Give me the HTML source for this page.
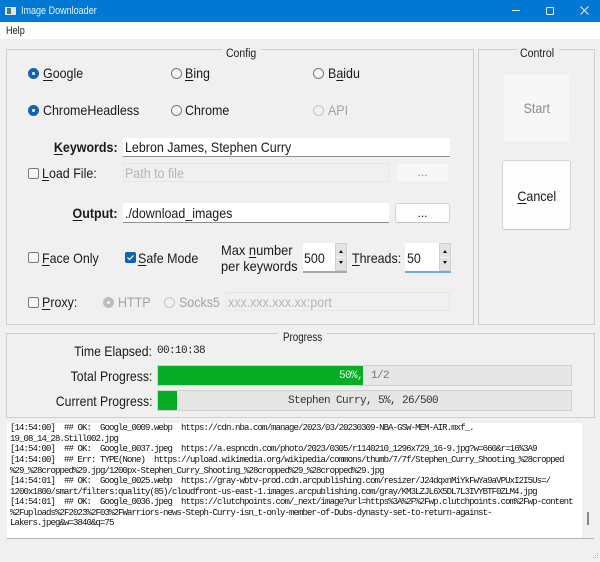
<!DOCTYPE html>
<html><head><meta charset="utf-8">
<style>
html,body{margin:0;padding:0;width:600px;height:562px;overflow:hidden;background:#f0f0f0}
body{position:relative;font-family:"Liberation Sans","DejaVu Sans",sans-serif;font-size:14px;color:#1a1a1a}
.a,.t,.r,.c,.m{position:absolute}
.t{white-space:pre;line-height:18px;height:18px;transform:translateY(-50%) scaleX(var(--s,.89));transform-origin:left center}
.rt{transform-origin:right center}
.d{color:#a3a3a3}
u{text-underline-offset:2px}
.box{position:absolute;border:1px solid #cfcfcf;box-sizing:border-box}
.r{width:9px;height:9px;border-radius:50%;border:1px solid #7a7a7a;background:#f7f7f7}
.r.on{width:3px;height:3px;border:4px solid #0f62b4;background:#fff}
.r.dis{border-color:#c4c4c4;background:#f0f0f0}
.r.dison{width:3px;height:3px;border:4px solid #bdbdbd;background:#f5f5f5}
.c{width:9px;height:9px;border:1px solid #7a7a7a;border-radius:2px;background:#f7f7f7}
.edit{position:absolute;background:#fff;border-bottom:1px solid #8f8f8f;box-sizing:border-box}
.edis{position:absolute;background:#f0f0f0;border:1px solid #e6e6e6;box-sizing:border-box}
.btn{position:absolute;background:#fdfdfd;border:1px solid #d4d4d4;border-bottom-color:#c4c4c4;border-radius:3px;box-sizing:border-box;text-align:center}
.btn.dis{background:#f7f7f7;border-color:#f1f1f1}
.btn span{display:inline-block;transform:scaleX(.89)}
.m{font-family:"Liberation Mono",monospace;white-space:pre}
.pm{font-size:11px;letter-spacing:-.6px;line-height:12px}
.log{font-size:9px;letter-spacing:-.9px;line-height:10px;height:10px;color:#111;left:10px}
.spin{position:absolute;width:10px;height:26px;background:#e2e2e2;border:1px solid #cfcfcf}
.spin:before,.spin:after{content:"";position:absolute;left:3px;border-left:2.5px solid transparent;border-right:2.5px solid transparent}
.spin:before{top:6px;border-bottom:3px solid #111}
.spin:after{bottom:6px;border-top:3px solid #111}
.spin i{position:absolute;left:0;right:0;top:13px;height:1px;background:#f8f8f8}
.bar{position:absolute;background:#e6e6e6;border:1px solid #d2d2d2;box-sizing:border-box;left:157px;width:415px;height:22px}
.fill{position:absolute;left:0;top:0;bottom:0;background:#06ad25}
</style></head>
<body>
<!-- title bar -->
<div class="a" style="left:0;top:0;width:600px;height:22px;background:#0078d4"></div>
<div class="a" style="left:5px;top:7px;width:11px;height:8px;background:#d8e6ea"></div>
<div class="a" style="left:7px;top:8px;width:4px;height:6px;background:#4f7a6d"></div>
<div class="t" style="left:21px;top:11px;color:#e8f3fb;font-size:11px;--s:.82">Image Downloader</div>
<svg class="a" style="left:500px;top:0" width="100" height="22" fill="none" stroke="#e6f1fa" stroke-width="1">
<path d="M12 10.500h8"/><rect x="46.500" y="7.500" width="7" height="7" rx="1"/><path d="M80.500 6.500l8 8M88.500 6.500l-8 8"/></svg>
<!-- menu -->
<div class="a" style="left:0;top:22px;width:600px;height:17px;background:#fff"></div>
<div class="t" style="left:6px;top:31px;font-size:11px;--s:.83">Help</div>

<!-- Config -->
<div class="box" style="left:6px;top:49px;width:468px;height:276px"></div>
<div class="a" style="left:222px;top:46px;width:39px;height:8px;background:#f0f0f0"></div>
<div class="t" style="left:226px;top:54px;font-size:11.500px;--s:.91">Config</div>

<div class="r on" style="left:28px;top:68px"></div>
<div class="t" style="left:43px;top:73px"><u>G</u>oogle</div>
<div class="r" style="left:171px;top:68px"></div>
<div class="t" style="left:185px;top:73px"><u>B</u>ing</div>
<div class="r" style="left:313px;top:68px"></div>
<div class="t" style="left:328px;top:73px">B<u>a</u>idu</div>

<div class="r on" style="left:28px;top:105px"></div>
<div class="t" style="left:43px;top:110px">ChromeHeadless</div>
<div class="r" style="left:171px;top:105px"></div>
<div class="t" style="left:185px;top:110px">Chrome</div>
<div class="r dis" style="left:313px;top:105px"></div>
<div class="t d" style="left:328px;top:110px">API</div>

<div class="t rt" style="right:482px;top:147px;font-weight:bold"><u>K</u>eywords:</div>
<div class="edit" style="left:123px;top:138px;width:327px;height:19px"></div>
<div class="t" style="left:125px;top:147px">Lebron James, Stephen Curry</div>

<div class="c" style="left:28px;top:168px"></div>
<div class="t" style="left:42px;top:173px"><u>L</u>oad File:</div>
<div class="edis" style="left:123px;top:163px;width:266px;height:19px"></div>
<div class="t" style="left:125px;top:173px;color:#b5b5b5">Path to file</div>
<div class="btn dis" style="left:396px;top:163px;width:53px;height:19px;color:#8a8a8a;line-height:17px;font-size:12px">...</div>

<div class="t rt" style="right:482px;top:213px;font-weight:bold"><u>O</u>utput:</div>
<div class="edit" style="left:123px;top:203px;width:266px;height:20px"></div>
<div class="t" style="left:125px;top:213px">./download_images</div>
<div class="btn" style="left:395px;top:203px;width:55px;height:20px;line-height:18px;font-size:12px">...</div>

<div class="c" style="left:28px;top:252px"></div>
<div class="t" style="left:42px;top:258px"><u>F</u>ace Only</div>
<div class="a" style="left:125px;top:252px;width:11px;height:11px;background:#0f62b4;border-radius:2px"></div>
<svg class="a" style="left:125px;top:252px" width="11" height="11" fill="none" stroke="#fff" stroke-width="1.200"><path d="M2.500 5.500l2 2 4-4"/></svg>
<div class="t" style="left:138px;top:258px"><u>S</u>afe Mode</div>
<div class="t" style="left:221px;top:250px;--s:.92">Max <u>n</u>umber</div>
<div class="t" style="left:221px;top:266px;--s:.92">per keywords</div>

<div class="edit" style="left:303px;top:243px;width:44px;height:30px;border-bottom:2px solid #a8a8a8"></div>
<div class="t" style="left:304px;top:258px">500</div>
<div class="spin" style="left:335px;top:243px"><i></i></div>
<div class="t" style="left:352px;top:258px"><u>T</u>hreads:</div>
<div class="edit" style="left:405px;top:243px;width:46px;height:30px;border-bottom:2px solid #73a9dc"></div>
<div class="t" style="left:407px;top:258px">50</div>
<div class="spin" style="left:439px;top:243px"><i></i></div>

<div class="c" style="left:28px;top:297px"></div>
<div class="t" style="left:42px;top:302px"><u>P</u>roxy:</div>
<div class="r dison" style="left:103px;top:297px"></div>
<div class="t d" style="left:118px;top:302px">HTTP</div>
<div class="r dis" style="left:164px;top:297px"></div>
<div class="t d" style="left:179px;top:302px">Socks5</div>
<div class="edis" style="left:226px;top:292px;width:224px;height:19px"></div>
<div class="t" style="left:228px;top:302px;color:#b5b5b5">xxx.xxx.xxx.xx:port</div>

<!-- Control -->
<div class="box" style="left:478px;top:49px;width:117px;height:276px"></div>
<div class="a" style="left:517px;top:46px;width:42px;height:8px;background:#f0f0f0"></div>
<div class="t" style="left:520px;top:54px;font-size:11.500px;--s:.92">Control</div>
<div class="btn dis" style="left:503px;top:74px;width:67px;height:68px;color:#8a8a8a;line-height:67px"><span>Start</span></div>
<div class="btn" style="left:502px;top:160px;width:69px;height:70px;line-height:70px"><span><u>C</u>ancel</span></div>

<!-- Progress -->
<div class="box" style="left:6px;top:333px;width:589px;height:85px"></div>
<div class="a" style="left:278px;top:330px;width:48px;height:8px;background:#f0f0f0"></div>
<div class="t" style="left:283px;top:338px;font-size:11.500px;--s:.85">Progress</div>

<div class="t rt" style="right:448px;top:351px;--s:.875">Time Elapsed:</div>
<div class="m pm" style="left:157px;top:345px;color:#222">00:10:38</div>
<div class="t rt" style="right:448px;top:376px;--s:.875">Total Progress:</div>
<div class="bar" style="top:365px;height:21px"><div class="fill" style="width:205px"></div></div>
<div class="m pm" style="left:339px;top:370px;color:#e8f8ea">50%,</div>
<div class="m pm" style="left:371px;top:370px;color:#777">1/2</div>
<div class="t rt" style="right:448px;top:401px;--s:.875">Current Progress:</div>
<div class="bar" style="top:390px;height:21px"><div class="fill" style="width:19px"></div></div>
<div class="m pm" style="left:288px;top:395px;color:#333">Stephen Curry, 5%, 26/500</div>

<!-- Log -->
<div class="a" style="left:7px;top:423px;width:575px;height:115px;background:#fff"></div>
<div class="a" style="left:7px;top:538px;width:587px;height:1px;background:#b4b4b4"></div>
<div class="a" style="left:587px;top:512px;width:2px;height:13px;background:#8a8a8a"></div>
<div class="a m log" style="top:423px">[14:54:00]  ## OK:  Google_0009.webp  https://cdn.nba.com/manage/2023/03/20230309-NBA-GSW-MEM-AIR.mxf_.</div>
<div class="a m log" style="top:434px">19_08_14_28.Still002.jpg</div>
<div class="a m log" style="top:444px">[14:54:00]  ## OK:  Google_0037.jpeg  https://a.espncdn.com/photo/2023/0305/r1140210_1296x729_16-9.jpg?w=660&amp;r=16%3A9</div>
<div class="a m log" style="top:455px">[14:54:00]  ## Err: TYPE(None)  https://upload.wikimedia.org/wikipedia/commons/thumb/7/7f/Stephen_Curry_Shooting_%28cropped</div>
<div class="a m log" style="top:466px">%29_%28cropped%29.jpg/1200px-Stephen_Curry_Shooting_%28cropped%29_%28cropped%29.jpg</div>
<div class="a m log" style="top:476px">[14:54:01]  ## OK:  Google_0025.webp  https://gray-wbtv-prod.cdn.arcpublishing.com/resizer/J24dqxnMiYkFwYa9aVPUxI2I5Us=/</div>
<div class="a m log" style="top:487px">1200x1800/smart/filters:quality(85)/cloudfront-us-east-1.images.arcpublishing.com/gray/KM3LZJL6X5DL7L3IVYBTF0ZLM4.jpg</div>
<div class="a m log" style="top:497px">[14:54:01]  ## OK:  Google_0036.jpeg  https://clutchpoints.com/_next/image?url=https%3A%2F%2Fwp.clutchpoints.com%2Fwp-content</div>
<div class="a m log" style="top:508px">%2Fuploads%2F2023%2F03%2FWarriors-news-Steph-Curry-isn_t-only-member-of-Dubs-dynasty-set-to-return-against-</div>
<div class="a m log" style="top:518px">Lakers.jpeg&amp;w=3840&amp;q=75</div>

<svg class="a" style="left:590px;top:552px" width="10" height="10" fill="#bdbdbd"><rect x="7" y="1" width="1" height="1"/><rect x="5" y="3" width="1" height="1"/><rect x="7" y="3" width="1" height="1"/><rect x="3" y="5" width="1" height="1"/><rect x="5" y="5" width="1" height="1"/><rect x="7" y="5" width="1" height="1"/></svg>
</body></html>
